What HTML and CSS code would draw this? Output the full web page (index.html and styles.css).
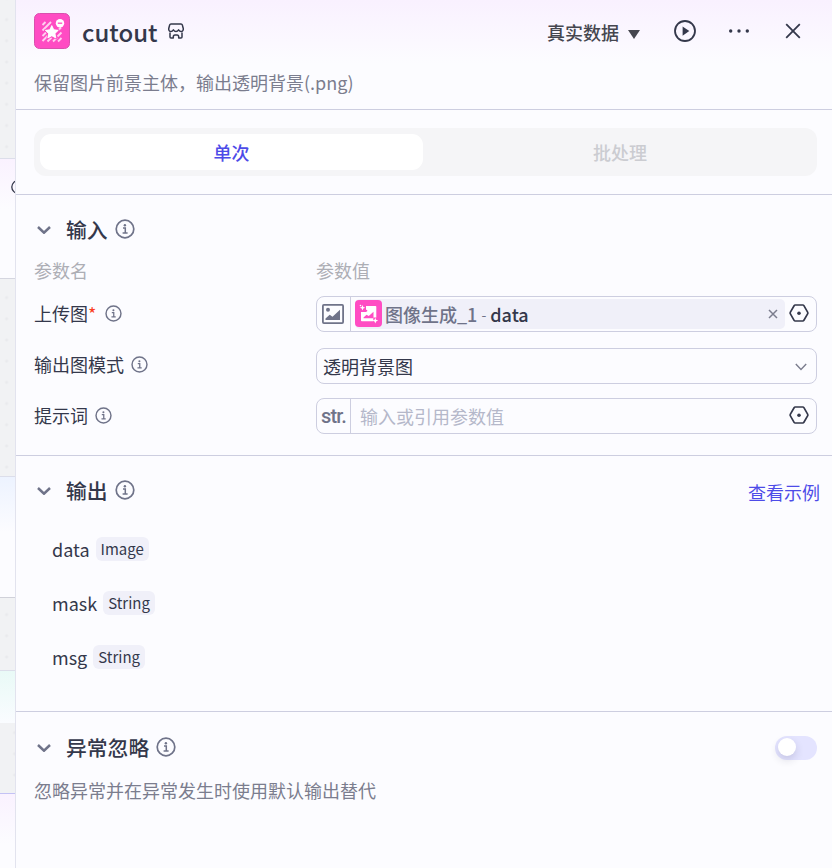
FILE: index.html
```html
<!DOCTYPE html>
<html lang="zh-CN">
<head>
  <meta charset="UTF-8" />
  <meta name="viewport" content="width=device-width, initial-scale=1.0"/>
  <title>cutout</title>
  <link rel="stylesheet" href="styles.css">
</head>
<body>
  <svg class="sprite" aria-hidden="true">
    <symbol id="info" viewBox="0 0 20 20">
      <circle cx="10" cy="10" r="8.8" fill="none" stroke="currentColor" stroke-width="1.7"/>
      <circle cx="9.9" cy="6.2" r="1.2" fill="currentColor"/>
      <path d="M8 9h2.300v5M7.600 14.100h5" fill="none" stroke="currentColor" stroke-width="1.500"/>
    </symbol>
    <symbol id="arrow" viewBox="0 0 14 8">
      <path d="M1 1l6 5.700L13 1" fill="none" stroke="currentColor" stroke-width="2.500"/>
    </symbol>
    <symbol id="hexagon" viewBox="0 0 20 18">
      <path d="M6.200 1h7.600q.7 0 1.100.7l3.700 6.400q.5.9 0 1.800l-3.700 6.400q-.4.7-1.100.7H6.200q-.7 0-1.100-.7L1.400 9.900q-.5-.9 0-1.800l3.700-6.400q.4-.7 1.100-.7z" fill="none" stroke="currentColor" stroke-width="1.700"/>
      <circle cx="10" cy="9.300" r="1.800" fill="currentColor"/>
    </symbol>
  </svg>

  <div class="page">
    <div class="canvas">
      <div class="grid grid-1"></div>
      <div class="node node-1">
        <svg class="node-play" viewBox="0 0 14 14"><circle cx="7" cy="7" r="6.200" fill="none" stroke="currentColor" stroke-width="1.300"/></svg>
      </div>
      <div class="grid grid-2"></div>
      <div class="node node-2"></div>
      <div class="grid grid-3"></div>
      <div class="node node-3"></div>
      <div class="grid grid-4"></div>
      <div class="node node-4"></div>
    </div>

    <div class="panel">
      <div class="header">
        <div class="title-row">
          <svg class="logo" viewBox="0 0 36 36">
            <rect x=".5" y=".5" width="35" height="35" rx="5" fill="#ff4cc3" stroke="#d950ae"/>
            <path d="M8.500 12l3-3M8.500 17.500l8.500-8.500M8.500 23l5-5M8.500 28l5-5M13.500 28.500l4-4M19 28.500l4-4M24 28.500l3.500-3.500M23.500 23.500l4-4M24 17.500l3-3" fill="none" stroke="#ffd0ef" stroke-width="1.900"/>
            <path d="M17.800 12.500l2 4.200 4.500.6-3.300 3.200.8 4.500-4-2.200-4 2.200.8-4.500-3.300-3.200 4.500-.6z" fill="#fff" stroke="#ff4cc3" stroke-width="2.400" paint-order="stroke" stroke-linejoin="round"/>
            <path d="M17.800 12.500l2 4.200 4.500.6-3.300 3.200.8 4.500-4-2.200-4 2.200.8-4.500-3.300-3.200 4.500-.6z" fill="#fff" stroke="#fff" stroke-width=".7" stroke-linejoin="round"/>
            <circle cx="26" cy="10.200" r="4.200" fill="#fff"/>
            <path d="M23.800 10.200h4.400" stroke="#ff4cc3" stroke-width="1.300"/>
          </svg>
          <span class="title">cutout</span>
          <svg class="store" viewBox="0 0 16 16">
            <path d="M3 .9h10q1 0 1.300 1l.9 3.300c.5 2-.7 3.300-2.100 3.300-1.200 0-1.900-.7-2.500-1.600C10 7.800 9.200 8.500 8 8.500S6 7.800 5.400 6.900C4.800 7.800 4.100 8.500 2.900 8.500 1.500 8.500.3 7.200.8 5.200l.9-3.300q.3-1 1.300-1z" fill="none" stroke="currentColor" stroke-width="1.500" stroke-linejoin="round"/>
            <path d="M2 9.500v4.600q0 1 1 1h2.300v-1.300q0-1.800 1.700-1.800h2q1.700 0 1.700 1.800v1.300H13q1 0 1-1V9.500" fill="none" stroke="currentColor" stroke-width="1.500" stroke-linejoin="round"/>
          </svg>
          <div class="actions">
            <span class="data-mode">真实数据</span>
            <svg class="triangle" viewBox="0 0 12 9"><path d="M0 0h12L6 9z" fill="currentColor"/></svg>
            <svg class="play" viewBox="0 0 22 22"><circle cx="11" cy="11" r="10" fill="none" stroke="currentColor" stroke-width="1.800"/><path d="M8.600 6.400v9.400L15.300 11z" fill="currentColor"/></svg>
            <svg class="more" viewBox="0 0 20 4"><g fill="currentColor"><circle cx="1.700" cy="2" r="1.700"/><circle cx="10" cy="2" r="1.700"/><circle cx="18.300" cy="2" r="1.700"/></g></svg>
            <svg class="close" viewBox="0 0 16 16"><path d="M1.200 1.200l13.600 13.600M14.800 1.200L1.200 14.800" fill="none" stroke="currentColor" stroke-width="1.800"/></svg>
          </div>
        </div>
        <p class="desc">保留图片前景主体，输出透明背景(.png)</p>
      </div>

      <div class="tabs-wrap">
        <div class="tabs">
          <div class="tab active">单次</div>
          <div class="tab">批处理</div>
        </div>
      </div>

      <div class="section input-section">
        <div class="section-head">
          <svg class="arrow"><use href="#arrow"/></svg>
          <h2>输入</h2>
          <svg class="info"><use href="#info"/></svg>
        </div>
        <div class="param-head">
          <span>参数名</span>
          <span>参数值</span>
        </div>
        <div class="param">
          <div class="label">上传图<em>*</em><svg class="info-sm"><use href="#info"/></svg></div>
          <div class="field">
            <div class="type">
              <svg class="picture" viewBox="0 0 22 20">
                <rect x=".9" y=".9" width="20.200" height="18.200" rx="1" fill="none" stroke="currentColor" stroke-width="1.800"/>
                <circle cx="6" cy="5.800" r="2" fill="currentColor"/>
                <path d="M3.500 16v-1.500l4.200-3.800 2.800 2 7.500-6.900V16z" fill="currentColor"/>
              </svg>
            </div>
            <div class="ref">
              <svg class="ref-icon" viewBox="0 0 27 27">
                <rect width="27" height="27" rx="4" fill="#ff4cc3"/>
                <path d="M11 6h9.500q.8 0 .8.800V17.500h-3v3.800H6.800q-.8 0-.8-.8V12h5z" fill="#fff"/>
                <path d="M8.500 18.300v-.8l3-2.700 2.300 1.200 4.700-4.200v6.500z" fill="#ff4cc3"/>
                <circle cx="11.300" cy="10.800" r="1" fill="#ff4cc3"/>
                <g fill="#fff">
                  <path d="M7.500 5l.8 2 2 .8-2 .8-.8 2-.8-2-2-.8 2-.8z"/>
                  <circle cx="5.500" cy="5.500" r=".8"/>
                  <path d="M20.300 17.800l.8 2 2 .8-2 .8-.8 2-.8-2-2-.8 2-.8z"/>
                </g>
              </svg>
              <span class="ref-node">图像生成_1</span>
              <span class="ref-sep">-</span>
              <span class="ref-name">data</span>
              <svg class="clear" viewBox="0 0 10 10"><path d="M1 1l8 8M9 1L1 9" stroke="currentColor" stroke-width="1.500"/></svg>
            </div>
            <svg class="hexagon"><use href="#hexagon"/></svg>
          </div>
        </div>
        <div class="param select-row">
          <div class="label">输出图模式<svg class="info-sm"><use href="#info"/></svg></div>
          <div class="field select">
            <span>透明背景图</span>
            <svg class="caret" viewBox="0 0 12 8"><path d="M.8 1L6 6.500 11.200 1" fill="none" stroke="currentColor" stroke-width="1.400"/></svg>
          </div>
        </div>
        <div class="param">
          <div class="label">提示词<svg class="info-sm"><use href="#info"/></svg></div>
          <div class="field">
            <div class="type"><span class="str">str.</span></div>
            <span class="placeholder">输入或引用参数值</span>
            <svg class="hexagon"><use href="#hexagon"/></svg>
          </div>
        </div>
      </div>

      <div class="section output-section">
        <div class="section-head">
          <svg class="arrow"><use href="#arrow"/></svg>
          <h2>输出</h2>
          <svg class="info"><use href="#info"/></svg>
          <a class="example-link">查看示例</a>
        </div>
        <div class="outputs">
          <div class="output"><span>data</span><span class="tag">Image</span></div>
          <div class="output"><span>mask</span><span class="tag">String</span></div>
          <div class="output"><span>msg</span><span class="tag">String</span></div>
        </div>
      </div>

      <div class="section error-section">
        <div class="section-head">
          <svg class="arrow"><use href="#arrow"/></svg>
          <h2>异常忽略</h2>
          <svg class="info"><use href="#info"/></svg>
          <div class="switch"><div class="knob"></div></div>
        </div>
        <p class="hint">忽略异常并在异常发生时使用默认输出替代</p>
      </div>
    </div>
  </div>
</body>
</html>
```
FILE: styles.css
```css
* {
  box-sizing: border-box;
}

body {
  margin: 0;
  font-family: "Noto Sans CJK SC", sans-serif;
  font-size: 18px;
  color: #34384b;
  background: #fcfcff;
}

svg {
  display: block;
  flex-shrink: 0;
}

.sprite {
  display: none;
}

.page {
  display: flex;
  height: 868px;
  overflow: hidden;
}

/* Workflow canvas behind the panel */
.canvas {
  display: flex;
  flex-direction: column;
  width: 15px;
  overflow: hidden;
  background: #f1f2f4;
}

.grid {
  background: radial-gradient(circle, #e9eaed 1.2px, transparent 1.8px) -4px 9px / 21.2px 21.2px;
}

.grid-1 { height: 158px; }
.grid-2 { height: 197px; background-position: -4px 8px; }
.grid-3 { height: 72px; background-position: -4px 6px; }
.grid-4 { height: 70px; background-position: 4px -1px; }

.node {
  border-top: 1px solid #dcdeea;
  background: #fcfcff;
}

.node-1 {
  height: 121px;
  padding: 21px 0 0 11px;
  border-bottom: 1px solid #d5d6e0;
  background: linear-gradient(#faf2ff, #fcfcff 50px);
}

.node-play {
  width: 14px;
  height: 14px;
  color: #34384b;
}

.node-2 {
  height: 122px;
  border-bottom: 1px solid #d0d1d9;
  background: linear-gradient(#edf3ff, #fcfcff 55px);
}

.node-3 {
  height: 53px;
  background: linear-gradient(#e9faf7, #fafcff);
}

.node-4 {
  flex: 1;
  border-color: #c4c2f5;
  background: linear-gradient(#faf2ff, #fcfcff 50px);
}

.panel {
  flex: 1;
  border-left: 1px solid #e2e3ee;
  background: linear-gradient(#f9f1ff, #fcfcff 64px);
}

/* Header */
.header {
  height: 110px;
  padding: 13px 31px 0 18px;
  border-bottom: 1px solid #cdcee0;
}

.title-row {
  display: flex;
  align-items: center;
  height: 36px;
}

.logo {
  width: 36px;
  height: 36px;
}

.title {
  margin: 2px 10px 0 12px;
  font-size: 24px;
  font-weight: 500;
  line-height: 36px;
}

.store {
  width: 16px;
  height: 16px;
}

.actions {
  display: flex;
  align-items: center;
  margin-left: auto;
}

.data-mode {
  margin-top: 2px;
  font-weight: 500;
  line-height: 28px;
  color: #45464f;
}

.triangle {
  width: 12px;
  height: 9px;
  margin: 6px 34px 0 9px;
  color: #45464f;
}

.play {
  width: 22px;
  height: 22px;
}

.more {
  width: 20px;
  height: 4px;
  margin: 0 36px 0 33px;
}

.close {
  width: 16px;
  height: 16px;
}

.desc {
  margin: 20px 0 0;
  line-height: 26px;
  color: #7b7d8e;
}

/* Tabs */
.tabs-wrap {
  height: 85px;
  padding: 18px 15px 0 18px;
  border-bottom: 1px solid #cdcee0;
}

.tabs {
  display: flex;
  height: 48px;
  padding: 6px 0 6px 6px;
  border-radius: 12px;
  background: #f5f5f7;
}

.tab {
  flex: 1 1 0;
  border-radius: 11px;
  font-weight: 500;
  line-height: 37px;
  text-align: center;
  color: #cbccd1;
}

.tab.active {
  flex: 0 0 383px;
  background: #fff;
  color: #4d4be8;
}

/* Sections */
.section {
  padding: 0 15px 0 18px;
  border-bottom: 1px solid #cdcee0;
}

.section-head {
  display: flex;
  align-items: center;
  height: 30px;
}

.arrow {
  width: 14px;
  height: 8px;
  margin: 1px 15px 0 3px;
  color: #6f7389;
}

.section h2 {
  margin: 0 7px 0 0;
  font-size: 20.8px;
  font-weight: 500;
  line-height: 30px;
}

.info {
  width: 20px;
  height: 20px;
  color: #6f7389;
}

.input-section {
  height: 261px;
  padding-top: 19px;
}

.param-head {
  display: flex;
  margin: 13px 0 13px;
  line-height: 26px;
  color: #adaeb5;
}

.param-head span {
  width: 282px;
}

.param {
  display: flex;
  height: 36px;
  margin-bottom: 16px;
}

.select-row {
  margin-bottom: 14px;
}

.label {
  display: flex;
  align-items: center;
  width: 282px;
  height: 33px;
}

.select-row .label {
  height: 32px;
}

.label em {
  width: 10px;
  font-style: normal;
  color: #fa3d1e;
}

.info-sm {
  width: 17px;
  height: 17px;
  margin: 1px 0 0 6.5px;
  color: #6f7389;
}

.field {
  display: flex;
  align-items: center;
  flex: 1;
  border: 1px solid #cdcee0;
  border-radius: 8px;
}

.type {
  display: flex;
  align-items: center;
  justify-content: center;
  width: 34px;
  height: 34px;
  border-right: 1px solid #cdcee0;
  color: #6f7389;
}

.picture {
  width: 22px;
  height: 20px;
  margin-right: 1px;
}

.str {
  font-family: Roboto, sans-serif;
  font-size: 20px;
  font-weight: 500;
  letter-spacing: -0.8px;
}

.ref {
  display: flex;
  align-items: center;
  flex: 1;
  height: 30px;
  margin-left: 4px;
  padding-right: 7px;
  border-radius: 5px;
  background: #f0f0f9;
}

.ref-icon {
  width: 27px;
  height: 27px;
  margin: 0 4px 1px 0;
}

.ref-node,
.ref-sep {
  color: #6f7389;
}

.ref-node,
.ref-name {
  font-weight: 500;
}

.ref-node {
  margin-left: -1px;
}

.ref-sep {
  margin: 0 4px;
  font-size: 14px;
}

.clear {
  width: 10px;
  height: 10px;
  margin-left: auto;
  color: #7b7d8e;
}

.hexagon {
  width: 20px;
  height: 18px;
  margin: 0 7px 2px 4px;
}

.select {
  justify-content: space-between;
  padding: 0 9px 0 6px;
}

.caret {
  width: 12px;
  height: 8px;
  margin-top: 2px;
  color: #7b7d8e;
}

.placeholder {
  flex: 1;
  margin-left: 9px;
  color: #b5b8ca;
}

/* Output */
.output-section {
  height: 256px;
  padding-top: 19px;
}

.example-link {
  margin: 3px -3px 0 auto;
  line-height: 26px;
  color: #4d4be8;
}

.outputs {
  margin: 18px 0 0 18px;
}

.output {
  display: flex;
  align-items: center;
  gap: 6px;
  height: 54px;
  padding-bottom: 2px;
  font-size: 18px;
}

.tag {
  height: 24px;
  padding: 0 5px;
  border-radius: 6px;
  font-size: 15px;
  line-height: 23px;
  background: #f0f0f9;
}

/* Error handling */
.error-section {
  padding-top: 20px;
  border-bottom: none;
}

.switch {
  width: 42px;
  height: 24px;
  margin: 1px 0 0 auto;
  padding: 2px 3px;
  border-radius: 12px;
  background: #e4e4ff;
}

.knob {
  width: 18px;
  height: 18px;
  border-radius: 50%;
  background: #fff;
  box-shadow: 0 4px 8px rgba(40, 40, 80, 0.16);
}

.hint {
  margin: 15px 0 0;
  line-height: 26px;
  color: #7b7d8e;
}
```
